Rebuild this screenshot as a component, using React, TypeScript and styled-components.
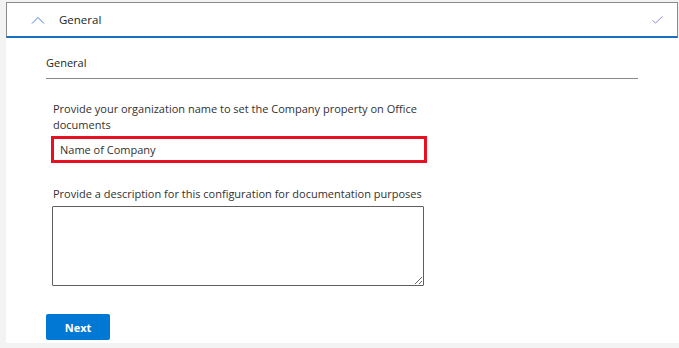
import styled, { createGlobalStyle } from "styled-components";

const GlobalStyle = createGlobalStyle`
  html, body {
    margin: 0;
    padding: 0;
    background: #f3f3f3;
    font-family: "Open Sans", "Noto Sans", sans-serif;
    color: #323130;
  }
`;

const Page = styled.div`
  width: 679px;
  height: 348px;
  padding: 2px 0 0 6px;
  box-sizing: border-box;
  display: flex;
  flex-direction: column;
`;

const Header = styled.div`
  height: 36px;
  box-sizing: border-box;
  border: 1px solid #8a8a8a;
  border-bottom: 2px solid #1a6fc0;
  width: 672px;
  background: #fff;
  display: flex;
  align-items: center;
  padding: 0 14px 0 24px;
`;

const HeaderTitle = styled.span`
  flex: 1;
  font-size: 11.5px;
  margin-left: 14px;
  color: #201f1e;
`;

const Body = styled.div`
  background: #fff;
  width: 673px;
  height: 305px;
  box-sizing: border-box;
  padding: 17px 0 0 40px;
  display: flex;
  flex-direction: column;
`;

const SectionTitle = styled.div`
  width: 592px;
  font-size: 11px;
  font-weight: 500;
  color: #201f1e;
  padding-bottom: 8px;
  border-bottom: 1px solid #8a8a8a;
`;

const Field = styled.div<{ $top: number }>`
  margin-top: ${(p) => p.$top}px;
  display: flex;
  flex-direction: column;
`;

const Label = styled.label`
  font-size: 11px;
  line-height: 16px;
  color: #323130;
  padding-left: 7px;
  width: 375px;
`;

const InputWrap = styled.div`
  margin: 3px 0 0 5px;
  width: 376px;
  height: 27px;
  box-sizing: border-box;
  border: 3px solid #e81123;
  display: flex;
  align-items: center;
  padding-left: 6px;
  font-size: 11px;
  color: #323130;
`;

const TextArea = styled.textarea`
  margin: 4px 0 0 6px;
  width: 372px;
  height: 80px;
  box-sizing: border-box;
  border: 1px solid #605e5c;
  border-radius: 1px;
  font-family: inherit;
  outline: none;
`;

const Button = styled.button`
  margin-top: 28px;
  width: 64px;
  height: 26px;
  border: none;
  border-radius: 2px;
  background: #0078d4;
  color: #fff;
  font-family: inherit;
  font-weight: 700;
  font-size: 11px;
`;

const Chevron = () => (
  <svg width="14" height="8" viewBox="0 0 14 8">
    <path d="M1 7.5 L7 1.5 L13 7.5" fill="none" stroke="#4a7fd8" strokeWidth="1" />
  </svg>
);

const Check = () => (
  <svg width="11" height="8" viewBox="0 0 11 8">
    <path d="M0.5 4.5 L3.5 7 L10.5 0.5" fill="none" stroke="#8c8ee0" strokeWidth="1" />
  </svg>
);

export default function App() {
  return (
    <>
      <GlobalStyle />
      <Page>
        <Header>
          <Chevron />
          <HeaderTitle>General</HeaderTitle>
          <Check />
        </Header>
        <Body>
          <SectionTitle>General</SectionTitle>
          <Field $top={22}>
            <Label>Provide your organization name to set the Company property on Office documents</Label>
            <InputWrap>Name of Company</InputWrap>
          </Field>
          <Field $top={23}>
            <Label>Provide a description for this configuration for documentation purposes</Label>
            <TextArea />
          </Field>
          <div>
            <Button>Next</Button>
          </div>
        </Body>
      </Page>
    </>
  );
}
